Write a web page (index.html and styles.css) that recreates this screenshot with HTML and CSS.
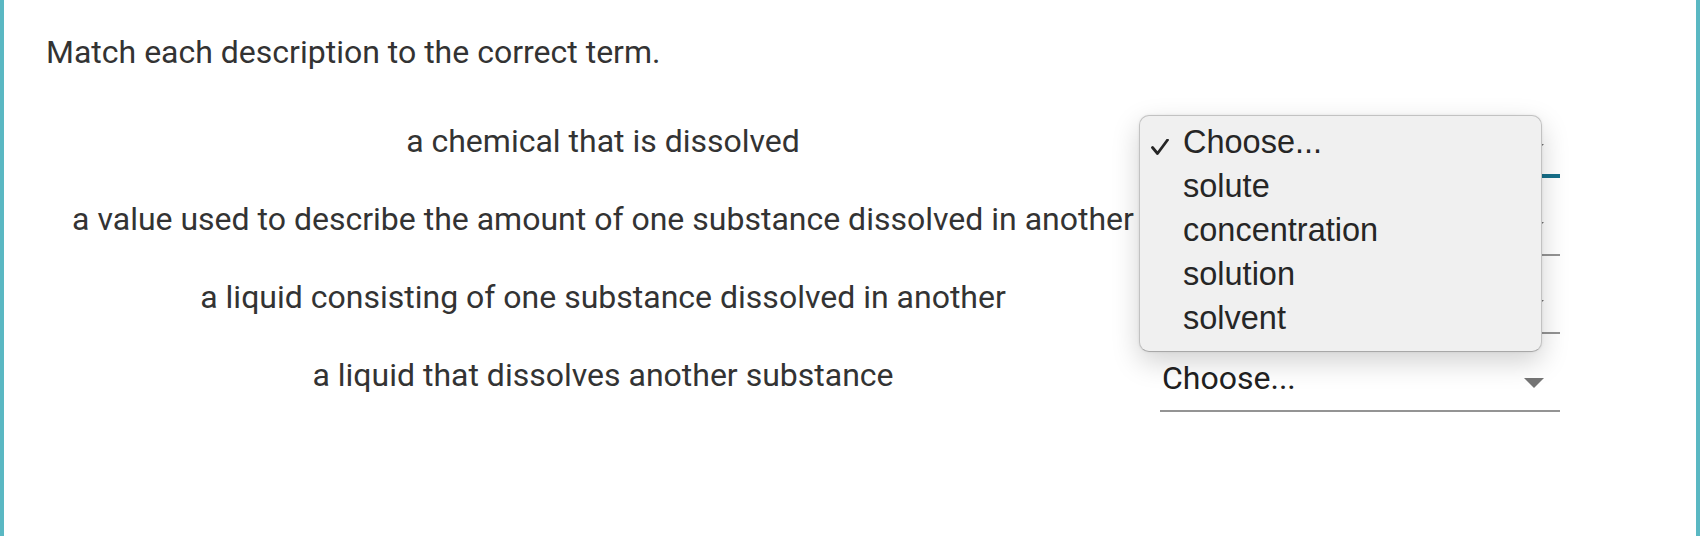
FILE: index.html
```html
<!DOCTYPE html>
<html lang="en">
<head>
<meta charset="utf-8">
<title>Match each description to the correct term</title>
<link rel="stylesheet" href="styles.css">
</head>
<body>
<div class="page">
  <p class="prompt">Match each description to the correct term.</p>
  <div class="matches">
    <div class="row">
      <div class="desc">a chemical that is dissolved</div>
      <div class="select focused">
        <span class="value">Choose...</span>
        <svg class="arrow" width="20" height="10" viewBox="0 0 20 10"><path d="M0 0H20L10 10Z"/></svg>
        <div class="menu">
          <div class="item checked">
            <svg class="check" width="18" height="16" viewBox="0 0 18 16"><path d="M1.5 8.5L6.5 14.5L16.5 1" /></svg>Choose...
          </div>
          <div class="item">solute</div>
          <div class="item">concentration</div>
          <div class="item">solution</div>
          <div class="item">solvent</div>
        </div>
      </div>
    </div>
    <div class="row">
      <div class="desc">a value used to describe the amount of one substance dissolved in another</div>
      <div class="select">
        <span class="value">Choose...</span>
        <svg class="arrow" width="20" height="10" viewBox="0 0 20 10"><path d="M0 0H20L10 10Z"/></svg>
      </div>
    </div>
    <div class="row">
      <div class="desc">a liquid consisting of one substance dissolved in another</div>
      <div class="select">
        <span class="value">Choose...</span>
        <svg class="arrow" width="20" height="10" viewBox="0 0 20 10"><path d="M0 0H20L10 10Z"/></svg>
      </div>
    </div>
    <div class="row">
      <div class="desc">a liquid that dissolves another substance</div>
      <div class="select">
        <span class="value">Choose...</span>
        <svg class="arrow" width="20" height="10" viewBox="0 0 20 10"><path d="M0 0H20L10 10Z"/></svg>
      </div>
    </div>
  </div>
</div>
</body>
</html>
```
FILE: styles.css
```css
html, body {
  margin: 0;
  padding: 0;
  background: #ffffff;
}

.page {
  box-sizing: border-box;
  width: 1700px;
  height: 536px;
  border-left: 4px solid #5ab8c3;
  border-right: 4px solid #5ab8c3;
  padding-left: 42px;
  font-family: Roboto, "Liberation Sans", sans-serif;
  font-size: 32px;
  color: #333333;
  overflow: hidden;
}

.prompt {
  margin: 0;
  padding-top: 33px;
  line-height: 38px;
}

.matches {
  margin-top: 31px;
  width: 1514px;
  display: flex;
  flex-direction: column;
}

.row {
  display: flex;
  align-items: center;
  height: 78px;
}

.desc {
  flex: 1;
  text-align: center;
  line-height: 38px;
  white-space: nowrap;
}

.select {
  position: relative;
  box-sizing: border-box;
  width: 400px;
  height: 74px;
  padding: 21px 16px 0 2px;
  border-bottom: 2px solid #949494;
  display: flex;
  justify-content: space-between;
  align-items: flex-start;
  line-height: 38px;
  color: #212121;
}

.select.focused {
  border-bottom: 4px solid #17708a;
}

.arrow {
  margin-top: 19px;
  fill: #757575;
}

.menu {
  position: absolute;
  z-index: 10;
  left: -21px;
  top: 11px;
  box-sizing: border-box;
  width: 403px;
  height: 237px;
  padding: 4px 0 11px 0;
  background: #f0f0f0;
  border: 1px solid #c2c2c2;
  border-bottom-color: #a8a8a8;
  border-radius: 10px;
  box-shadow: 0 10px 28px rgba(0, 0, 0, 0.18), 0 0 3px rgba(0, 0, 0, 0.08);
  font-family: "Liberation Sans", Arial, sans-serif;
  font-size: 32.5px;
  line-height: 44px;
  color: #262626;
}

.item {
  position: relative;
  padding-left: 43px;
  white-space: nowrap;
}

.check {
  position: absolute;
  left: 11px;
  top: 19px;
  fill: none;
  stroke: #262626;
  stroke-width: 2.8;
  stroke-linecap: round;
  stroke-linejoin: round;
}
```
